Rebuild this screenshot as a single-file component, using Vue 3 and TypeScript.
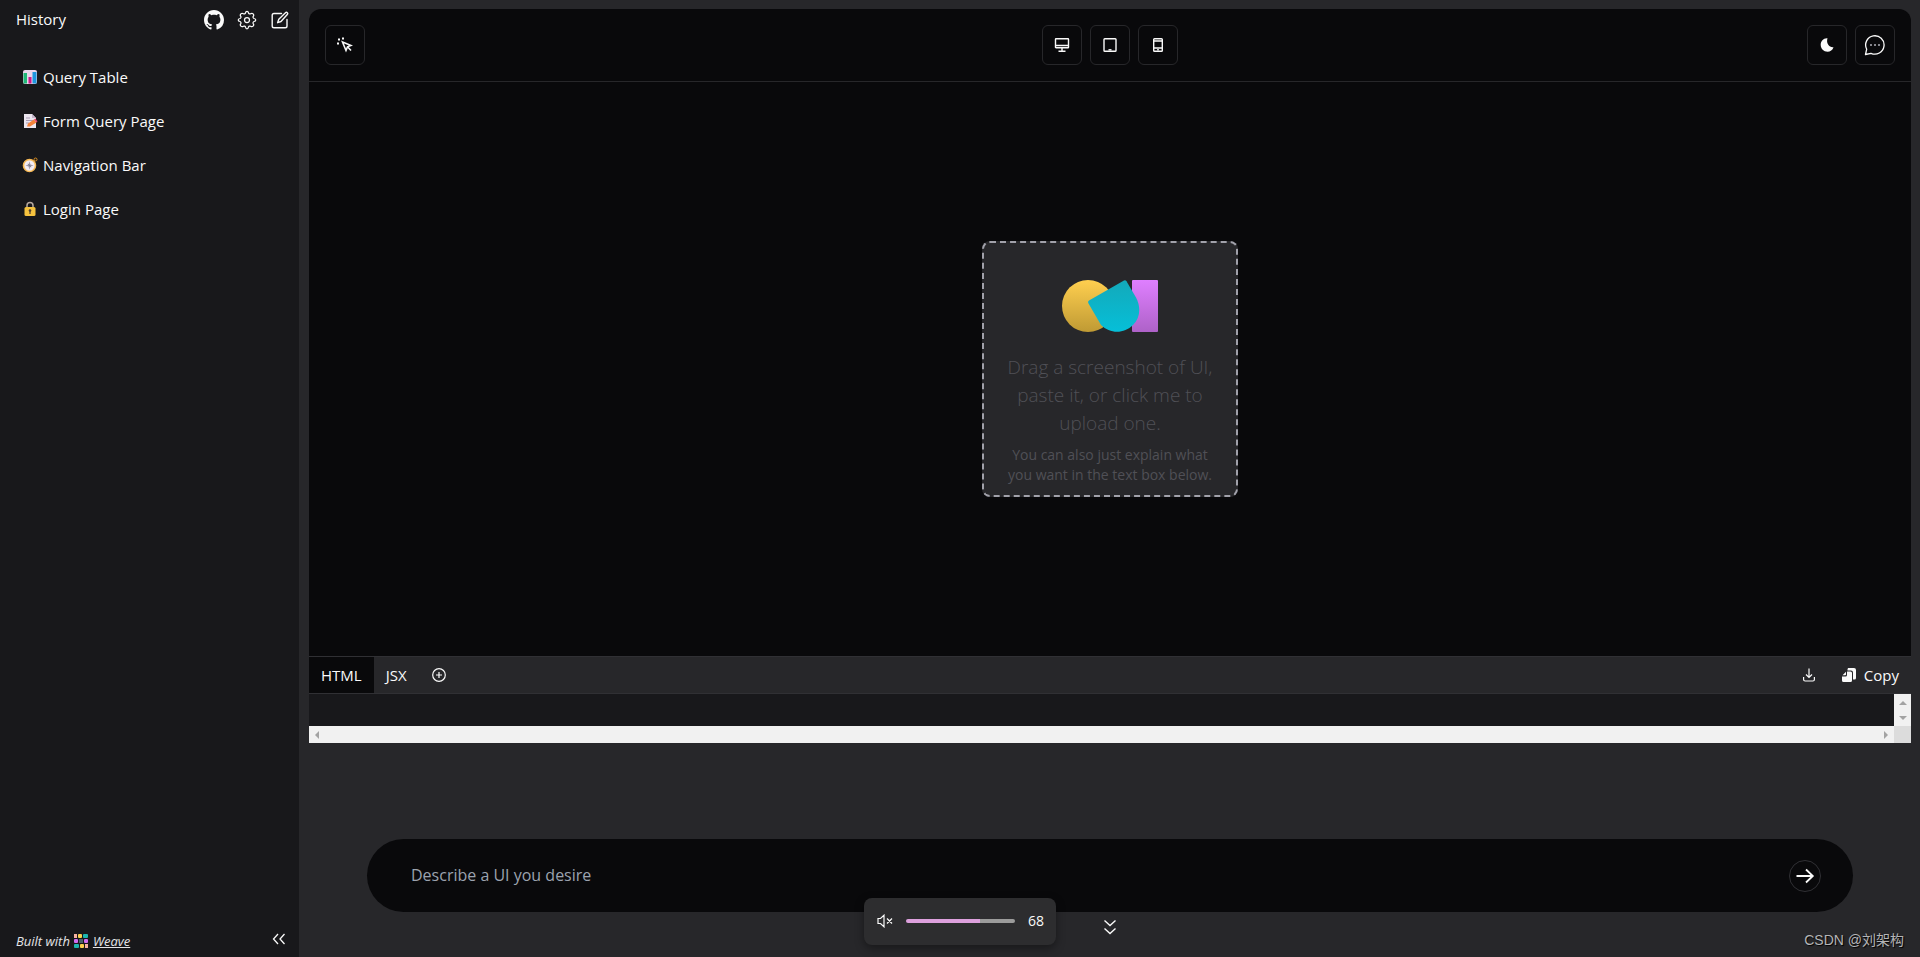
<script setup lang="ts">
import { ref } from 'vue'

interface HistoryItem {
  icon: 'chart' | 'memo' | 'compass' | 'lock'
  label: string
}

const history: HistoryItem[] = [
  { icon: 'chart', label: 'Query Table' },
  { icon: 'memo', label: 'Form Query Page' },
  { icon: 'compass', label: 'Navigation Bar' },
  { icon: 'lock', label: 'Login Page' },
]

const tabs = ['HTML', 'JSX']
const activeTab = ref('HTML')
const prompt = ref('')
const volume = ref(68)
</script>

<template>
  <div class="app">
    <aside class="sidebar">
      <header class="side-head">
        <h1>History</h1>
        <div class="side-actions">
          <a href="#" aria-label="GitHub">
            <svg width="20" height="20" viewBox="0 0 16 16" fill="currentColor"><path d="M8 0C3.58 0 0 3.58 0 8c0 3.54 2.29 6.53 5.47 7.59.4.07.55-.17.55-.38 0-.19-.01-.82-.01-1.49-2.01.37-2.53-.49-2.69-.94-.09-.23-.48-.94-.82-1.13-.28-.15-.68-.52-.01-.53.63-.01 1.08.58 1.23.82.72 1.21 1.87.87 2.33.66.07-.52.28-.87.51-1.07-1.78-.2-3.64-.89-3.64-3.95 0-.87.31-1.59.82-2.15-.08-.2-.36-1.02.08-2.12 0 0 .67-.21 2.2.82.64-.18 1.32-.27 2-.27s1.36.09 2 .27c1.53-1.04 2.2-.82 2.2-.82.44 1.1.16 1.92.08 2.12.51.56.82 1.27.82 2.15 0 3.07-1.87 3.75-3.65 3.95.29.25.54.73.54 1.48 0 1.07-.01 1.93-.01 2.2 0 .21.15.46.55.38A8.01 8.01 0 0 0 16 8c0-4.42-3.58-8-8-8z" /></svg>
          </a>
          <button type="button" aria-label="Settings">
            <svg width="20" height="20" viewBox="0 0 24 24" fill="none" stroke="currentColor" stroke-width="1.5" stroke-linejoin="round" stroke-linecap="round">
              <path d="M10.200 3.600C10.600 .8 13.400 .8 13.800 3.600C14.100 4.600 15.400 5.100 16.300 4.500C18.500 2.900 21.100 5.500 19.500 7.700C18.900 8.600 19.400 9.900 20.400 10.200C23.200 10.600 23.200 13.400 20.400 13.800C19.400 14.100 18.900 15.400 19.500 16.300C21.100 18.500 18.500 21.100 16.300 19.500C15.400 18.900 14.100 19.400 13.800 20.400C13.400 23.200 10.600 23.200 10.200 20.400C9.900 19.400 8.600 18.900 7.700 19.500C5.500 21.100 2.900 18.500 4.500 16.300C5.100 15.400 4.600 14.100 3.600 13.800C.8 13.400 .8 10.600 3.600 10.200C4.600 9.900 5.100 8.600 4.500 7.700C2.900 5.500 5.500 2.900 7.700 4.500C8.600 5.100 9.900 4.600 10.200 3.600Z" />
              <circle cx="12" cy="12" r="3" />
            </svg>
          </button>
          <button type="button" aria-label="New page">
            <svg width="20" height="20" viewBox="0 0 20 20" fill="none" stroke="currentColor" stroke-width="1.4" stroke-linejoin="round" stroke-linecap="round">
              <path d="M11.5 3.5H4Q2.2 3.5 2.2 5.300V16Q2.2 17.800 4 17.800H15.200Q17 17.800 17 16V9.500" />
              <path d="M15.500 2.700Q16.400 1.800 17.300 2.700Q18.200 3.600 17.300 4.500L11 11.500L7.600 12.700L8.800 9.300Z" />
            </svg>
          </button>
        </div>
      </header>

      <nav aria-label="History">
        <a v-for="item in history" :key="item.label" href="#" class="history-item">
          <svg v-if="item.icon === 'chart'" width="16" height="16" viewBox="0 0 16 16">
            <rect x="1" y="1" width="14" height="14" rx="2" fill="#e8d5ea" />
            <rect x="1.500" y="4" width="3.500" height="10.500" fill="#1fb877" />
            <rect x="6.500" y="8" width="3" height="6.500" fill="#cc1688" />
            <rect x="10.500" y="3" width="4" height="11.500" fill="#1c96dd" />
          </svg>
          <svg v-else-if="item.icon === 'memo'" width="16" height="16" viewBox="0 0 16 16">
            <path d="M2 1h8l4 4v10H2z" fill="#ece6f0" />
            <path d="M10 1v4h4z" fill="#c4b6cc" />
            <path d="M4 5h4M4 7.500h7M4 10h3" stroke="#a99bb4" />
            <path d="M5 13.500l1-3L12 6.500l2.500 3L8 13.500z" fill="#f4823a" />
            <path d="M12 6.500l1.500-1 2 3-1 1z" fill="#e8446e" />
          </svg>
          <svg v-else-if="item.icon === 'compass'" width="16" height="16" viewBox="0 0 16 16">
            <circle cx="13.500" cy="2.500" r="1.500" fill="none" stroke="#d98d20" />
            <circle cx="7.500" cy="8.500" r="6" fill="#f3edf5" stroke="#f7b955" stroke-width="1.600" />
            <path d="M7.500 4.500l1 3 3 1-3 1-1 3-1-3-3-1 3-1z" fill="#a79ca9" />
            <path d="M5.500 6.500l2.500 1.500 1.500 2.500-2.500-1.500z" fill="#737b8c" />
          </svg>
          <svg v-else width="16" height="16" viewBox="0 0 16 16">
            <path d="M5 7V4.500a3 3 0 0 1 6 0V7" fill="none" stroke="#b7a9a0" stroke-width="1.500" />
            <rect x="2.500" y="6" width="11" height="9" rx="1.500" fill="#f5c23e" />
            <circle cx="8" cy="9.500" r="1.300" fill="#4e3d2e" />
            <path d="M8 10v3" stroke="#4e3d2e" stroke-width="1.200" />
          </svg>
          <span>{{ item.label }}</span>
        </a>
      </nav>

      <footer class="side-foot">
        <p class="credit">
          Built with
          <svg width="14" height="14" viewBox="0 0 14 14">
            <rect width="3" height="4" fill="#f7b2a0" /><rect x="4" width="4" height="4" rx="1" fill="#fcd04d" /><rect x="9" width="5" height="4" rx="1" fill="#1cb5ae" />
            <rect y="5" width="4" height="4" rx="1" fill="#cf6df0" /><rect x="5" y="5" width="4" height="4" fill="#46606a" /><rect x="10" y="5" width="4" height="4" rx="1" fill="#cf6df0" />
            <rect y="10" width="5" height="4" rx="1" fill="#1cb5ae" /><rect x="6" y="10" width="4" height="4" rx="1" fill="#fcd04d" /><rect x="11" y="10" width="3" height="4" fill="#f7b2a0" />
          </svg>
          <a href="#">Weave</a>
        </p>
        <button type="button" aria-label="Collapse sidebar">
          <svg width="14" height="12" viewBox="0 0 14 12" fill="none" stroke="currentColor" stroke-width="1.300"><path d="M6 1L1.500 6L6 11M12.500 1L8 6L12.500 11" /></svg>
        </button>
      </footer>
    </aside>

    <main class="main">
      <section class="preview">
        <header class="toolbar">
          <div class="group">
            <button type="button" class="tool" aria-label="Select element">
              <svg width="16" height="16" viewBox="0 0 16 16"><path d="M5.500 5L14 8.500L10.500 9.800L9 13.500Z" fill="none" stroke="currentColor" stroke-width="1.600" /><path d="M10.500 9.800L14 13.500" stroke="currentColor" stroke-width="1.600" /><path d="M0 5.500h2v2H0zM1 1.500h2v2H1zM5 .5h2v2H5z" fill="currentColor" /></svg>
            </button>
          </div>
          <div class="group">
            <button type="button" class="tool" aria-label="Desktop">
              <svg width="16" height="16" viewBox="0 0 16 16" fill="none" stroke="currentColor" stroke-width="1.400"><rect x="1.500" y="1.700" width="13" height="9" rx=".5" /><path d="M1.500 8.500h13M8 11v3M4.500 14.300h7" /></svg>
            </button>
            <button type="button" class="tool" aria-label="Tablet">
              <svg width="16" height="16" viewBox="0 0 16 16" fill="none" stroke="currentColor" stroke-width="1.400"><rect x="2" y="1.700" width="12" height="12.600" rx=".8" /><path d="M6.500 12.800h3" /></svg>
            </button>
            <button type="button" class="tool" aria-label="Phone">
              <svg width="16" height="16" viewBox="0 0 16 16" fill="none" stroke="currentColor" stroke-width="1.400"><rect x="3.700" y="1.700" width="8.600" height="12.600" rx=".8" /><path d="M3.700 4h8.600M3.700 11h8.600M7.200 12.800h1.600" /></svg>
            </button>
          </div>
          <div class="group end">
            <button type="button" class="tool" aria-label="Dark mode">
              <svg width="16" height="16" viewBox="0 0 16 16" fill="currentColor"><path d="M8.500 1.200C4.500 .8 1.700 4 1.700 7.800C1.700 11.800 4.800 14.800 8.500 14.800C11.300 14.800 13.600 13 14.500 10.200C10.500 10.800 6.800 6.300 8.500 1.200Z" /></svg>
            </button>
            <button type="button" class="tool" aria-label="Chat">
              <svg width="22" height="22" viewBox="0 0 22 22" fill="none" stroke="currentColor" stroke-width="1.300" stroke-linejoin="round"><path d="M2.700 15.200A9.200 9.200 0 1 1 7 19.300L1.500 20.500Z" /><path d="M6 11h2M10 11h2M14 11h2" stroke="#85858c" stroke-width="1.800" /></svg>
            </button>
          </div>
        </header>

        <div class="canvas">
          <button type="button" class="dropzone">
            <svg width="96" height="52" viewBox="0 0 96 52">
              <defs>
                <linearGradient id="gold" x2="0" y2="1"><stop stop-color="#ffcf4f" /><stop offset="1" stop-color="#bf9a34" /></linearGradient>
                <linearGradient id="pink" x2="0" y2="1"><stop stop-color="#df7fff" /><stop offset="1" stop-color="#ae62c8" /></linearGradient>
                <linearGradient id="teal" x2="0" y2="1"><stop stop-color="#13a9ba" /><stop offset="1" stop-color="#06bfd8" /></linearGradient>
              </defs>
              <circle cx="26" cy="26" r="26" fill="url(#gold)" />
              <rect x="70" width="26" height="52" rx="1" fill="url(#pink)" />
              <path d="M62 .5Q63.500-.3 64.500 1.300L74 17.500C79 27 78.500 37.500 71 45C62 54 48 54 39 45L26.500 23.500Q25.500 21.500 27 20.500Z" fill="url(#teal)" />
            </svg>
            <span class="lead">Drag a screenshot of UI, paste it, or click me to upload one.</span>
            <span class="hint">You can also just explain what you want in the text box below.</span>
          </button>
        </div>
      </section>

      <section class="code">
        <div class="tabs">
          <button v-for="tab in tabs" :key="tab" type="button" class="tab" :class="{ active: tab === activeTab }" @click="activeTab = tab">{{ tab }}</button>
          <button type="button" class="tab" aria-label="Add framework">
            <svg width="16" height="16" viewBox="0 0 16 16" fill="none" stroke="currentColor" stroke-width="1.200"><circle cx="8" cy="8" r="6.300" /><path d="M8 5v6M5 8h6" /></svg>
          </button>
          <button type="button" class="download" aria-label="Download">
            <svg width="14" height="14" viewBox="0 0 14 14" fill="none" stroke="currentColor" stroke-width="1.200"><path d="M7 .5v9M4 6.500l3 3 3-3M1.600 9v2.500q0 1.500 1.500 1.500h7.800q1.500 0 1.500-1.500V9" /></svg>
          </button>
          <button type="button" class="copy">
            <svg width="14" height="14" viewBox="0 0 14 14" fill="currentColor"><path d="M6 0h6q2 0 2 2v8q0 1.500-1.500 1.500H11V4.500Q11 2.500 9 2.500H5.500V1.500z" /><path d="M5 3.500h3.500Q10 3.500 10 5v7.500q0 1.500-1.500 1.500h-7Q0 14 0 12.500V8.500h3.500Q5 8.500 5 7zM4 3.700V6.500q0 .8-.8.8H.5z" /></svg>
            Copy
          </button>
        </div>
        <div class="editor">
          <div class="source"></div>
          <div class="bar vertical"><i class="arrow up"></i><i class="arrow down"></i></div>
          <div class="bar horizontal"><i class="arrow left"></i><i class="arrow right"></i></div>
          <div class="corner"></div>
        </div>
      </section>

      <section class="composer">
        <form class="prompt" @submit.prevent>
          <input v-model="prompt" type="text" aria-label="Describe a UI you desire" placeholder="Describe a UI you desire" />
          <button type="submit" class="send" aria-label="Send">
            <svg width="20" height="16" viewBox="0 0 20 16" fill="none" stroke="currentColor" stroke-width="1.800"><path d="M1.500 8h16M11 1.500L17.800 8L11 14.500" /></svg>
          </button>
        </form>
        <button type="button" class="more" aria-label="Show more">
          <svg width="14" height="18" viewBox="0 0 14 18" fill="none" stroke="currentColor" stroke-width="1.400"><path d="M1.500 2.500L7 7.500L12.500 2.500M1.500 10.500L7 15.500L12.500 10.500" /></svg>
        </button>
      </section>
    </main>

    <div class="volume">
      <svg width="16" height="14" viewBox="0 0 16 14" fill="none" stroke="currentColor" stroke-width="1.200"><path d="M1 4.500h2.500L7 1.200v11.600L3.500 9.500H1zM10 4.500l5 5M15 4.500l-5 5" /></svg>
      <input v-model.number="volume" type="range" min="0" max="100" aria-label="Volume" :style="{ '--level': volume + '%' }" />
      <output>{{ volume }}</output>
    </div>
    <p class="watermark">CSDN @刘架构</p>
  </div>
</template>

<style>
body {
  background: #27272a;
}
</style>

<style scoped>
* {
  box-sizing: border-box;
  margin: 0;
}
.app {
  position: relative;
  display: flex;
  min-height: 100vh;
  overflow: hidden;
  background: #27272a;
  color: #fafafa;
  font: 15px/24px "Open Sans", "Noto Sans", "Noto Sans CJK SC", sans-serif;
}
svg {
  display: block;
  flex: none;
}
button {
  display: flex;
  align-items: center;
  justify-content: center;
  padding: 0;
  border: 0;
  background: none;
  color: inherit;
  font: inherit;
  cursor: pointer;
}
a {
  color: inherit;
  text-decoration: none;
}

.sidebar {
  display: flex;
  flex: none;
  flex-direction: column;
  width: 299px;
  background: #18181b;
}
.side-head {
  display: flex;
  align-items: center;
  justify-content: space-between;
  padding: 8px 9px 8px 16px;
}
h1 {
  font-size: 15px;
  font-weight: 400;
  line-height: 22px;
}
.side-head {
  align-items: flex-start;
}
.side-actions {
  display: flex;
  gap: 13px;
  padding-top: 2px;
}
nav {
  flex: 1;
  padding: 17px 22px;
}
.history-item {
  display: flex;
  align-items: center;
  gap: 5px;
  height: 44px;
}
.side-foot {
  display: flex;
  align-items: flex-start;
  justify-content: space-between;
  padding: 0 13px 4px 16px;
}
.side-foot button {
  padding-top: 4px;
}
.credit {
  display: flex;
  align-items: center;
  gap: 4px;
  color: #e4e4e7;
  font-size: 13px;
  font-style: italic;
}
.credit a {
  padding-left: 1px;
  text-decoration: underline;
}

.main {
  display: flex;
  flex: 1;
  flex-direction: column;
  min-width: 0;
  padding: 9px 9px 0 10px;
}
.preview {
  display: flex;
  flex: 1;
  flex-direction: column;
  border-radius: 12px 12px 0 0;
  background: #09090b;
}
.toolbar {
  display: grid;
  grid-template-columns: 1fr auto 1fr;
  padding: 16px;
  border-bottom: 1px solid #27272a;
}
.group {
  display: flex;
  gap: 8px;
}
.end {
  justify-content: flex-end;
}
.tool {
  width: 40px;
  height: 40px;
  border: 1px solid #27272a;
  border-radius: 6px;
}
.canvas {
  display: flex;
  flex: 1;
  align-items: center;
  justify-content: center;
}
.dropzone {
  flex-direction: column;
  width: 256px;
  height: 256px;
  padding: 26px 16px 0;
  border: 2px dashed #a1a1aa;
  border-radius: 8px;
  background: #27272a;
  color: #505056;
}
.lead {
  margin: 21px 0 8px;
  font-size: 19px;
  font-weight: 300;
  line-height: 28px;
}
.hint {
  font-size: 14px;
  line-height: 20px;
}

.tabs {
  display: flex;
  height: 38px;
  border-top: 1px solid #303034;
  border-bottom: 1px solid #303034;
}
.tabs button {
  padding-bottom: 1px;
}
.tab {
  padding: 0 12px;
}
.active {
  background: #09090b;
}
.download {
  margin-left: auto;
  padding: 0 12px;
}
.copy {
  gap: 8px;
  padding: 0 12px 0 14px;
}
.editor {
  display: grid;
  grid-template-columns: 1fr 17px;
  grid-template-rows: 32px 17px;
  background: #18181b;
}
.bar {
  display: flex;
  align-items: center;
  justify-content: space-between;
  background: #f1f1f1;
}
.vertical {
  flex-direction: column;
  padding: 7px 0 6px;
}
.horizontal {
  padding: 0 6px;
}
.corner {
  background: #dcdcdc;
}
.arrow {
  border: 4px solid transparent;
}
.up {
  border-top: 0;
  border-bottom-color: #a3a3a3;
}
.down {
  border-bottom: 0;
  border-top-color: #a3a3a3;
}
.left {
  border-left: 0;
  border-right-color: #a3a3a3;
}
.right {
  border-right: 0;
  border-left-color: #a3a3a3;
}

.composer {
  display: flex;
  flex-direction: column;
  align-items: center;
  padding: 96px 58px 0;
}
.prompt {
  display: flex;
  align-items: center;
  width: 100%;
  height: 73px;
  padding: 0 32px 0 44px;
  border-radius: 37px;
  background: #09090b;
}
.prompt input {
  flex: 1;
  min-width: 0;
  height: 100%;
  padding: 0 0 2px;
  border: 0;
  outline: 0;
  background: none;
  color: inherit;
  font: inherit;
  font-size: 16px;
}
.prompt input::placeholder {
  color: #9ca3af;
}
.send {
  width: 32px;
  height: 32px;
  border: 1px solid #303034;
  border-radius: 50%;
}
.more {
  margin: 6px 0 21px;
}

/* Floating overlays above the page */
.volume {
  position: absolute;
  bottom: 12px;
  left: 50%;
  display: flex;
  align-items: center;
  gap: 13px;
  width: 192px;
  height: 47px;
  padding: 0 12px 1px 13px;
  border-radius: 8px;
  background: #2d2d2f;
  box-shadow: 0 3px 10px #0006;
  font-size: 14px;
  transform: translateX(-50%);
}
.volume input {
  flex: 1;
  min-width: 0;
  height: 4px;
  margin: 0;
  border-radius: 2px;
  appearance: none;
  background: linear-gradient(to right, #dda0dd var(--level), #9b9b9b var(--level));
}
.volume input::-webkit-slider-thumb {
  width: 1px;
  height: 1px;
  appearance: none;
}
.watermark {
  position: absolute;
  right: 16px;
  bottom: 5px;
  color: #b4b4b6;
  font: 14px/24px "Liberation Sans", "Noto Sans CJK SC", sans-serif;
  text-shadow: 1px 1px 1px #000;
}
</style>
